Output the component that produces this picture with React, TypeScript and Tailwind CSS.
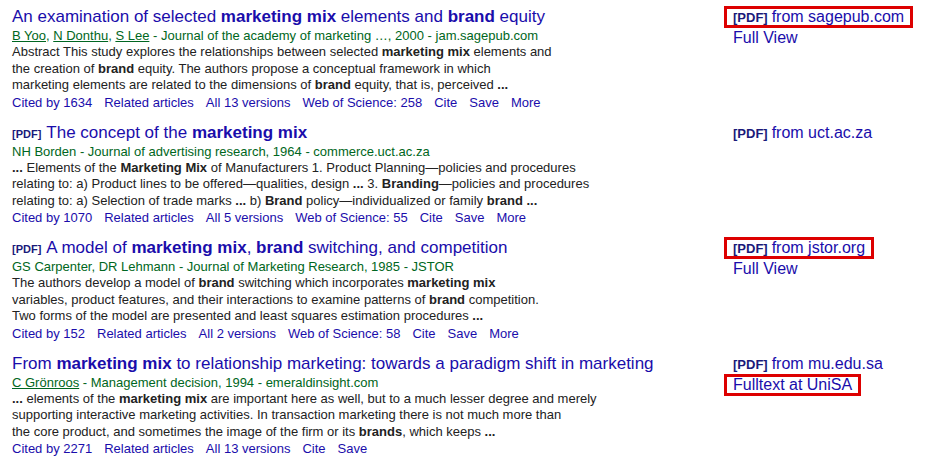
type Result = {
  pdf?: boolean
  title: string
  authors: { text: string; link?: boolean }[]
  snippet: string[]
  links: string[]
  side: { text: string; pdf?: boolean; boxed?: boolean }[]
}

const results: Result[] = [
  {
    title: "An examination of selected **marketing mix** elements and **brand** equity",
    authors: [
      { text: "B Yoo", link: true },
      { text: ", " },
      { text: "N Donthu", link: true },
      { text: ", " },
      { text: "S Lee", link: true },
      { text: " - Journal of the academy of marketing …, 2000 - jam.sagepub.com" },
    ],
    snippet: [
      "Abstract This study explores the relationships between selected **marketing mix** elements and",
      "the creation of **brand** equity. The authors propose a conceptual framework in which",
      "marketing elements are related to the dimensions of **brand** equity, that is, perceived **...**",
    ],
    links: ["Cited by 1634", "Related articles", "All 13 versions", "Web of Science: 258", "Cite", "Save", "More"],
    side: [
      { text: "from sagepub.com", pdf: true, boxed: true },
      { text: "Full View" },
    ],
  },
  {
    pdf: true,
    title: "The concept of the **marketing mix**",
    authors: [{ text: "NH Borden - Journal of advertising research, 1964 - commerce.uct.ac.za" }],
    snippet: [
      "**...** Elements of the **Marketing Mix** of Manufacturers 1. Product Planning—policies and procedures",
      "relating to: a) Product lines to be offered—qualities, design **...** 3. **Branding**—policies and procedures",
      "relating to: a) Selection of trade marks **...** b) **Brand** policy—individualized or family **brand ...**",
    ],
    links: ["Cited by 1070", "Related articles", "All 5 versions", "Web of Science: 55", "Cite", "Save", "More"],
    side: [{ text: "from uct.ac.za", pdf: true }],
  },
  {
    pdf: true,
    title: "A model of **marketing mix**, **brand** switching, and competition",
    authors: [{ text: "GS Carpenter, DR Lehmann - Journal of Marketing Research, 1985 - JSTOR" }],
    snippet: [
      "The authors develop a model of **brand** switching which incorporates **marketing mix**",
      "variables, product features, and their interactions to examine patterns of **brand** competition.",
      "Two forms of the model are presented and least squares estimation procedures **...**",
    ],
    links: ["Cited by 152", "Related articles", "All 2 versions", "Web of Science: 58", "Cite", "Save", "More"],
    side: [
      { text: "from jstor.org", pdf: true, boxed: true },
      { text: "Full View" },
    ],
  },
  {
    title: "From **marketing mix** to relationship marketing: towards a paradigm shift in marketing",
    authors: [
      { text: "C Grönroos", link: true },
      { text: " - Management decision, 1994 - emeraldinsight.com" },
    ],
    snippet: [
      "**...** elements of the **marketing mix** are important here as well, but to a much lesser degree and merely",
      "supporting interactive marketing activities. In transaction marketing there is not much more than",
      "the core product, and sometimes the image of the firm or its **brands**, which keeps **...**",
    ],
    links: ["Cited by 2271", "Related articles", "All 13 versions", "Cite", "Save"],
    side: [
      { text: "from mu.edu.sa", pdf: true },
      { text: "Fulltext at UniSA", boxed: true },
    ],
  },
]

// "**word**" -> bold
function Rich({ s }: { s: string }) {
  return (
    <>
      {s.split("**").map((part, i) =>
        i % 2 === 1 ? <b key={i}>{part}</b> : <span key={i}>{part}</span>
      )}
    </>
  )
}

function Row({ r }: { r: Result }) {
  return (
    <div className="flex">
      <div className="w-[712px] shrink-0">
        <h3 className="h-5 text-[17px] leading-5 text-[#1a0dab] whitespace-nowrap">
          {r.pdf && <span className="text-[11px] font-bold text-[#1a1a7a] mr-[5px]">[PDF]</span>}
          <Rich s={r.title} />
        </h3>
        <div className="h-[17px] text-[13px] leading-[17px] text-[#006621] whitespace-nowrap">
          {r.authors.map((a, i) =>
            a.link ? (
              <span key={i} className="underline">{a.text}</span>
            ) : (
              <span key={i}>{a.text}</span>
            )
          )}
        </div>
        <div className="text-[13px] leading-[16.5px] text-[#222]">
          {r.snippet.map((line, i) => (
            <div key={i} className="whitespace-nowrap">
              <Rich s={line} />
            </div>
          ))}
        </div>
        <div className="flex gap-3 h-[17px] text-[13px] leading-[17px] text-[#1a0dab] whitespace-nowrap">
          {r.links.map((l) => (
            <span key={l}>{l}</span>
          ))}
        </div>
      </div>
      <div className="-mt-px flex flex-col items-start">
        {r.side.map((s, i) => (
          <span
            key={i}
            className={`inline-block h-[22px] px-[6px] border-[3px] text-[16px] leading-4 text-[#1a0dab] whitespace-nowrap ${
              s.boxed ? "border-[#dd0000]" : "border-transparent"
            } ${i > 0 ? "-mt-px" : ""}`}
          >
            {s.pdf && <span className="text-[13px] font-bold text-[#1a1a7a] mr-[4px]">[PDF]</span>}
            {s.text}
          </span>
        ))}
      </div>
    </div>
  )
}

export default function App() {
  return (
    <div className="w-[942px] h-[468px] overflow-hidden bg-white pl-3 pt-[7px] font-['Liberation_Sans',Arial,sans-serif]">
      <div className="flex flex-col gap-[12px]">
        {results.map((r, i) => (
          <Row key={i} r={r} />
        ))}
      </div>
    </div>
  )
}
